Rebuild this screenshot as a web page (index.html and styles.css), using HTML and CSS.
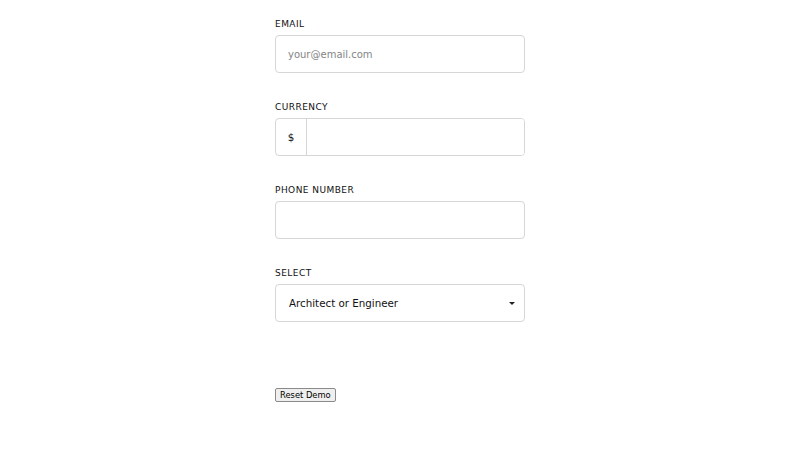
FILE: index.html
```html
<!DOCTYPE html>
<html lang="en">
<head>
<meta charset="utf-8">
<title>Form demo</title>
<link rel="stylesheet" href="styles.css">
</head>
<body>
<main class="form">
  <div class="field">
    <label class="label" for="email">Email</label>
    <input class="input" id="email" type="email" placeholder="your@email.com">
  </div>
  <div class="field">
    <label class="label" for="currency">Currency</label>
    <div class="group">
      <span class="prefix">$</span>
      <input class="input input-bare" id="currency" type="text">
    </div>
  </div>
  <div class="field">
    <label class="label" for="phone">Phone Number</label>
    <input class="input" id="phone" type="tel">
  </div>
  <div class="field">
    <label class="label" for="select">Select</label>
    <div class="select-wrap">
      <select class="input select" id="select">
        <option>Architect or Engineer</option>
        <option>Designer</option>
        <option>Developer</option>
      </select>
      <span class="caret"></span>
    </div>
  </div>
  <div class="actions">
    <button class="reset" type="button">Reset Demo</button>
  </div>
</main>
</body>
</html>
```

FILE: styles.css
```css
html, body {
  margin: 0;
  padding: 0;
  background: #ffffff;
}

body {
  font-family: "DejaVu Sans", Verdana, sans-serif;
  color: #1f1f1f;
}

.form {
  width: 250px;
  margin: 0 auto;
  padding-top: 18px;
  display: flex;
  flex-direction: column;
  gap: 28px;
}

.field {
  display: flex;
  flex-direction: column;
  gap: 4px;
}

.label {
  font-size: 9px;
  line-height: 13px;
  letter-spacing: 0.45px;
  text-transform: uppercase;
  color: #111111;
}

.input {
  box-sizing: border-box;
  width: 100%;
  height: 38px;
  margin: 0;
  padding: 0 12px;
  border: 1px solid #d6d6d6;
  border-radius: 4px;
  background: #ffffff;
  font-family: "DejaVu Sans", Verdana, sans-serif;
  font-size: 10px;
  color: #1f1f1f;
  outline: none;
}

.input::placeholder {
  color: #858585;
}

.group {
  display: flex;
  height: 38px;
  box-sizing: border-box;
  border: 1px solid #d6d6d6;
  border-radius: 4px;
  overflow: hidden;
}

.prefix {
  width: 30px;
  flex: none;
  display: flex;
  align-items: center;
  justify-content: center;
  border-right: 1px solid #d6d6d6;
  font-size: 10.3px;
  color: #111111;
}

.input-bare {
  border: none;
  border-radius: 0;
  height: 36px;
  flex: 1;
}

.select-wrap {
  position: relative;
}

.select {
  appearance: none;
  -webkit-appearance: none;
  padding-left: 13px;
  font-size: 10.3px;
  color: #111111;
}

.caret {
  position: absolute;
  right: 10px;
  top: 18px;
  width: 0;
  height: 0;
  border-left: 3px solid transparent;
  border-right: 3px solid transparent;
  border-top: 3px solid #222222;
  pointer-events: none;
}

.actions {
  padding-top: 33px;
}

.reset {
  font-family: "DejaVu Sans", Verdana, sans-serif;
  font-size: 8.33px;
  line-height: 10px;
  padding: 1px 4px;
  margin: 0;
  border: 1px solid #8a8a8a;
  border-radius: 2px;
  background: #efefef;
  color: #000000;
}
```
